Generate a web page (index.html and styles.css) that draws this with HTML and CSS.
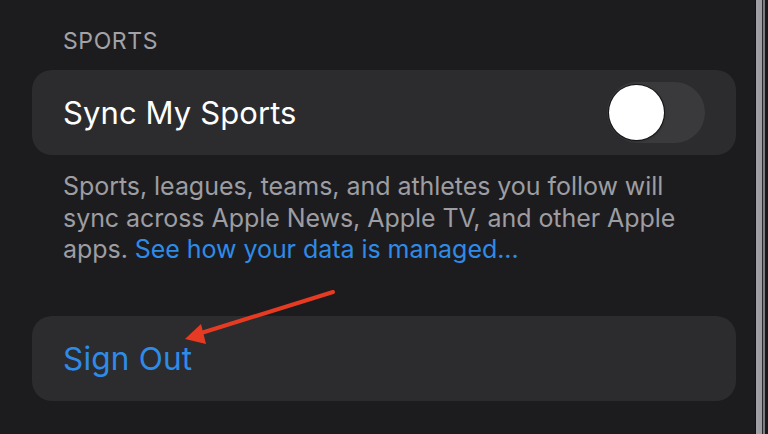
FILE: index.html
```html
<!DOCTYPE html>
<html lang="en">
<head>
    <meta charset="UTF-8">
    <meta name="viewport" content="width=device-width, initial-scale=1.0">
    <title>Sports Settings</title>
    <link rel="stylesheet" href="styles.css">
</head>
<body>
    <div class="screen">
        <div class="section-header">SPORTS</div>

        <div class="group">
            <div class="row">
                <span class="row-label">Sync My Sports</span>
                <span class="switch"><span class="knob"></span></span>
            </div>
        </div>

        <p class="section-footer">Sports, leagues, teams, and athletes you follow will sync across Apple News, Apple TV, and other Apple apps. <a class="link" href="#">See how your data is managed...</a></p>

        <div class="group group-action">
            <div class="row">
                <span class="action">Sign Out</span>
            </div>
        </div>
    </div>

    <div class="frame-edge"></div>

    <!-- annotation arrow pointing at Sign Out -->
    <svg class="annotation" width="768" height="434" viewBox="0 0 768 434">
        <line x1="333" y1="292" x2="198" y2="334" stroke="#e63b22" stroke-width="4" stroke-linecap="round"/>
        <polygon points="185,339 201,324 206,344" fill="#e63b22"/>
    </svg>
</body>
</html>
```

FILE: styles.css
```css
* {
    box-sizing: border-box;
}

html, body {
    margin: 0;
    height: 434px;
    overflow: hidden;
}

body {
    background-color: #1c1c1e;
    font-family: Inter, "Noto Sans", sans-serif;
    position: relative;
}

.screen {
    padding: 27px 32px 0;
}

.section-header {
    padding-left: 31px;
    font-size: 23px;
    line-height: 28px;
    color: #a2a2a7;
    letter-spacing: 0.6px;
    margin-bottom: 15px;
}

.group {
    background-color: #2c2c2e;
    border-radius: 20px;
    height: 85px;
}

.row {
    height: 100%;
    display: flex;
    align-items: center;
    justify-content: space-between;
    padding: 0 31px;
}

.row-label {
    color: #ffffff;
    font-size: 31px;
    letter-spacing: 0.1px;
}

.switch {
    width: 98px;
    height: 61px;
    border-radius: 31px;
    background-color: #3a3a3d;
    padding: 3px 2px;
    display: flex;
    align-items: center;
}

.knob {
    width: 55px;
    height: 55px;
    border-radius: 50%;
    background-color: #ffffff;
    box-shadow: 0 0 0 1px #141416, 0 1px 3px rgba(0, 0, 0, 0.4);
}

.section-footer {
    margin: 16px 0 0;
    padding: 0 31px;
    font-size: 25px;
    line-height: 31.7px;
    letter-spacing: -0.05px;
    color: #9d9da2;
}

.link {
    color: #2f8be8;
    text-decoration: none;
}

.group-action {
    margin-top: 50px;
}

.action {
    color: #2f8be8;
    font-size: 31.5px;
    letter-spacing: 0.2px;
}

.frame-edge {
    position: absolute;
    top: 0;
    left: 755px;
    width: 13px;
    height: 434px;
    background: linear-gradient(to right,
        #121214 0, #121214 1px,
        #a2a2a8 1px, #9a9aa0 7px,
        #2a2a2e 7px, #2a2a2e 8px,
        #7c7c82 8px, #7c7c82 10px,
        #18181a 10px);
}

.annotation {
    position: absolute;
    top: 0;
    left: 0;
    pointer-events: none;
}
```
